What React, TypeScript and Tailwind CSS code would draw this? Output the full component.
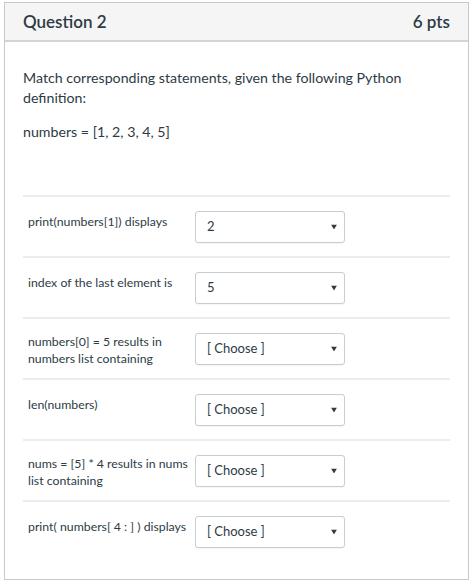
import React from "react";

type Row = {
  label: string;
  value: string;
  twoLine?: boolean;
};

const rows: Row[] = [
  { label: "print(numbers[1]) displays", value: "2" },
  { label: "index of the last element is", value: "5" },
  { label: "numbers[0] = 5 results in numbers list containing", value: "[ Choose ]", twoLine: true },
  { label: "len(numbers)", value: "[ Choose ]" },
  { label: "nums = [5] * 4 results in nums list containing", value: "[ Choose ]", twoLine: true },
  { label: "print( numbers[ 4 : ] ) displays", value: "[ Choose ]" },
];

function Select({ value }: { value: string }) {
  return (
    <div className="relative flex h-[32px] w-[150px] shrink-0 items-center rounded-[3px] border border-[#c7cdd1] bg-white pl-[11px] text-[13px] text-[#2d3b45] shadow-[0_1px_1px_rgba(0,0,0,0.04)]">
      <span>{value}</span>
      <svg
        viewBox="0 0 6 5"
        className="absolute right-[7px] top-1/2 h-[5px] w-[6px] -translate-y-1/2 fill-[#2d3b45]"
      >
        <path d="M0 0h6L3 5z" />
      </svg>
    </div>
  );
}

export default function App() {
  return (
    <div className="min-h-screen bg-white pl-[4px] pt-[2px] font-['Lato','Noto_Sans',sans-serif]">
      <div className="h-[578px] w-[465px] border border-[#c9c9c9] bg-white">
        <div className="flex h-[39px] items-center justify-between border-b-2 border-[#d4d4d4] bg-[#f5f5f5] px-[18px] text-[17px] font-semibold text-[#2d3b45]">
          <span>Question 2</span>
          <span>6 pts</span>
        </div>

        <div className="px-[18px] pt-[26px] text-[#2d3b45]">
          <p className="text-[14.2px] leading-[20px]">
            Match corresponding statements, given the following Python definition:
          </p>
          <p className="mt-[14px] text-[14.2px] leading-[20px]">numbers = [1, 2, 3, 4, 5]</p>

          <div className="mt-[53px]">
            {rows.map((row) => (
              <div
                key={row.label}
                className="flex h-[61px] items-start border-t-2 border-[#ececec] pt-[14px]"
              >
                <div
                  className={
                    row.twoLine
                      ? "w-[172px] pl-[5px] pr-[4px] pt-[0px] text-[12.3px] leading-[17px]"
                      : "w-[172px] pl-[5px] pr-[4px] pt-[2px] text-[12.3px] leading-[17px]"
                  }
                >
                  {row.label}
                </div>
                <Select value={row.value} />
              </div>
            ))}
          </div>
        </div>
      </div>
    </div>
  );
}
